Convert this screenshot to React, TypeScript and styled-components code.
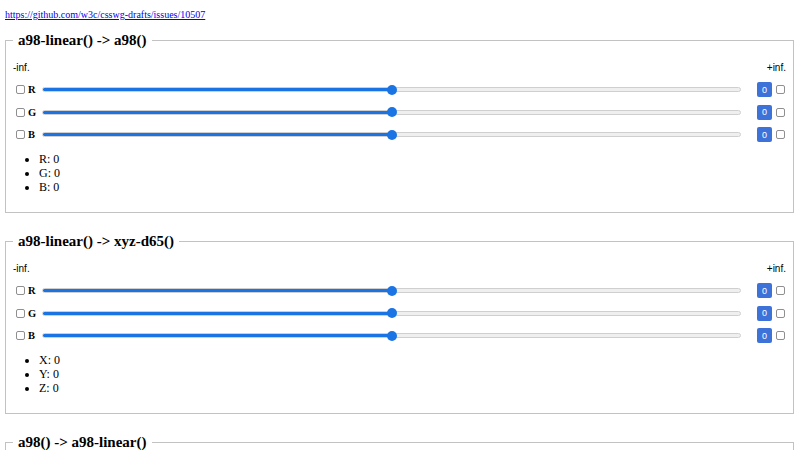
import { useState } from "react";
import styled, { createGlobalStyle } from "styled-components";

const GlobalStyle = createGlobalStyle`
  body {
    margin: 0;
    background: #ffffff;
    color: #000000;
    font-family: "Liberation Serif", "Times New Roman", serif;
  }
`;

const Page = styled.div`
  padding: 0 6px 20px 5px;
`;

const TopLink = styled.p`
  margin: 0;
  padding-top: 9px;
  height: 21px;
  font-size: 10px;
  line-height: 12px;
  a {
    color: #0000ee;
  }
`;

const Group = styled.fieldset`
  margin: 0 0 18px 0;
  padding: 6px 7px 8px 7px;
  border: 1px solid #c2c2c2;
`;

const Legend = styled.legend`
  padding: 0 5px;
  font-family: "Liberation Serif", "Times New Roman", serif;
  font-weight: bold;
  font-size: 15px;
  line-height: 20px;
`;

const Ends = styled.div`
  display: flex;
  justify-content: space-between;
  align-items: center;
  height: 22.5px;
  font-family: "Liberation Sans", Arial, sans-serif;
  font-size: 10px;
`;

const Row = styled.div`
  display: flex;
  align-items: center;
  height: 22.5px;
`;

const Check = styled.input.attrs({ type: "checkbox" })`
  appearance: none;
  margin: 0 0 0 3px;
  width: 9px;
  height: 9px;
  border: 1px solid #8f8f8f;
  border-radius: 2px;
  background: #ffffff;
  box-sizing: border-box;
  &:checked {
    background: #1b74e4;
    border-color: #1b74e4;
  }
`;

const EndCheck = styled(Check)`
  margin: 0 1px 0 4px;
`;

const Channel = styled.b`
  width: 17px;
  padding-left: 3px;
  font-size: 10.5px;
  box-sizing: border-box;
`;

const Slider = styled.input.attrs({ type: "range" })`
  appearance: none;
  flex: 1;
  height: 12px;
  margin: 0 16px 0 0;
  background: transparent;
  &::-webkit-slider-runnable-track {
    height: 5px;
    border-radius: 3px;
    box-sizing: border-box;
    border: 1px solid #cfcfcf;
    background: linear-gradient(
      to right,
      #1b74e4 var(--pct),
      #efefef var(--pct)
    );
  }
  &::-webkit-slider-thumb {
    appearance: none;
    width: 10px;
    height: 10px;
    margin-top: -3.5px;
    border-radius: 50%;
    background: #1b74e4;
  }
`;

const Value = styled.button`
  width: 15px;
  height: 15px;
  padding: 0;
  border: none;
  border-radius: 2px;
  background: #3d72d8;
  color: #ffffff;
  font-family: "Liberation Sans", Arial, sans-serif;
  font-size: 9px;
`;

const Results = styled.ul`
  margin: 6px 0 10px 0;
  padding-left: 26px;
  font-size: 12px;
  line-height: 14px;
`;

type Conversion = { title: string; outputs: string[] };

const conversions: Conversion[] = [
  { title: "a98-linear() -> a98()", outputs: ["R", "G", "B"] },
  { title: "a98-linear() -> xyz-d65()", outputs: ["X", "Y", "Z"] },
  { title: "a98() -> a98-linear()", outputs: ["R", "G", "B"] },
];

const inputs = ["R", "G", "B"];

function ConversionBox({ title, outputs }: Conversion) {
  const [values, setValues] = useState([0, 0, 0]);
  const update = (i: number, v: number) =>
    setValues((prev) => prev.map((p, j) => (j === i ? v : p)));
  return (
    <Group>
      <Legend>{title}</Legend>
      <Ends>
        <span>-inf.</span>
        <span>+inf.</span>
      </Ends>
      {inputs.map((name, i) => (
        <Row key={name}>
          <Check />
          <Channel>{name}</Channel>
          <Slider
            min={-1}
            max={1}
            step={0.01}
            value={values[i]}
            onChange={(e) => update(i, Number(e.target.value))}
            style={{ "--pct": `${((values[i] + 1) / 2) * 100}%` } as React.CSSProperties}
          />
          <Value onClick={() => update(i, 0)}>{values[i]}</Value>
          <EndCheck />
        </Row>
      ))}
      <Results>
        {outputs.map((name, i) => (
          <li key={name}>
            {name}: {values[i]}
          </li>
        ))}
      </Results>
    </Group>
  );
}

export default function App() {
  return (
    <>
      <GlobalStyle />
      <Page>
        <TopLink>
          <a href="https://github.com/w3c/csswg-drafts/issues/10507">
            https://github.com/w3c/csswg-drafts/issues/10507
          </a>
        </TopLink>
        {conversions.map((c) => (
          <ConversionBox key={c.title} {...c} />
        ))}
      </Page>
    </>
  );
}
